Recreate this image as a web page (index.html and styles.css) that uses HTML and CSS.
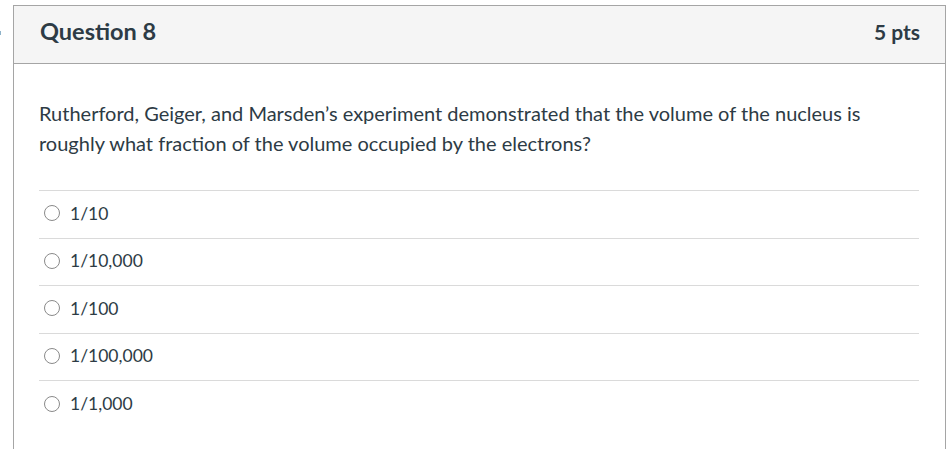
FILE: index.html
```html
<!DOCTYPE html>
<html>
<head>
<meta charset="utf-8">
<link rel="stylesheet" href="styles.css">
</head>
<body>
<div class="page">
  <span class="flag-edge"></span>
  <div class="card">
    <div class="header">
      <h2 class="title">Question 8</h2>
      <span class="pts">5 pts</span>
    </div>
    <div class="body">
      <p class="text">Rutherford, Geiger, and Marsden’s experiment demonstrated that the volume of the nucleus is roughly what fraction of the volume occupied by the electrons?</p>
      <div class="answers">
        <label class="answer"><span class="radio"></span><span class="label">1/10</span></label>
        <label class="answer"><span class="radio"></span><span class="label">1/10,000</span></label>
        <label class="answer"><span class="radio"></span><span class="label">1/100</span></label>
        <label class="answer"><span class="radio"></span><span class="label">1/100,000</span></label>
        <label class="answer"><span class="radio"></span><span class="label">1/1,000</span></label>
      </div>
    </div>
  </div>
</div>
</body>
</html>
```
FILE: styles.css
```css
* { box-sizing: border-box; }
html, body { margin: 0; padding: 0; background: #fff; }
body {
  font-family: Lato, "Noto Sans", sans-serif;
  color: #2d3b45;
  overflow: hidden;
  height: 449px;
}
.page {
  position: relative;
  padding: 5px 0 0 13px;
}
.flag-edge {
  position: absolute;
  left: 0;
  top: 31px;
  width: 1px;
  height: 4px;
  background: #8fb3c9;
}
.card {
  width: 933px;
  border: 1px solid #a5a5a5;
  border-bottom: none;
  height: 460px;
}
.header {
  height: 58px;
  background: #f5f5f5;
  border-bottom: 1px solid #a5a5a5;
  display: flex;
  align-items: center;
  justify-content: space-between;
  padding: 0 25px 7px 26px;
}
.title {
  margin: 0;
  font-size: 23.5px;
  font-weight: 700;
  color: #2d3b45;
}
.pts {
  font-size: 21px;
  font-weight: 700;
  color: #2d3b45;
}
.body {
  padding: 34px 26px 0 25px;
}
.text {
  margin: 0;
  font-size: 20px;
  line-height: 30px;
  color: #2d3b45;
}
.answers {
  margin-top: 32px;
  border-top: 1px solid #dadada;
}
.answer {
  display: flex;
  align-items: center;
  height: 47.5px;
  border-bottom: 1px solid #dadada;
  padding-left: 5px;
  padding-bottom: 2px;
}
.answer:last-child { border-bottom: none; }
.radio {
  width: 16px;
  height: 16px;
  border: 1px solid #8a8a8a;
  border-radius: 50%;
  margin-right: 10px;
  flex: none;
}
.label {
  font-size: 17.5px;
  color: #2d3b45;
}
```
